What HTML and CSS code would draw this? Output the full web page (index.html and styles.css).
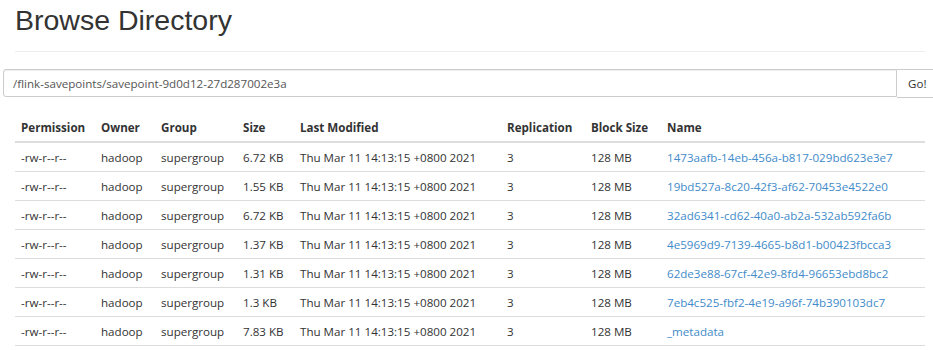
FILE: index.html
```html
<!DOCTYPE html>
<html>
<head>
<meta charset="utf-8">
<link rel="stylesheet" href="styles.css">
</head>
<body>
<div class="page">
  <h1 class="title">Browse Directory</h1>
  <hr class="rule">
  <div class="search">
    <input class="path" type="text" value="/flink-savepoints/savepoint-9d0d12-27d287002e3a">
    <button class="go">Go!</button>
  </div>
  <table class="listing">
    <thead>
      <tr>
        <th class="c-perm">Permission</th>
        <th class="c-owner">Owner</th>
        <th class="c-group">Group</th>
        <th class="c-size">Size</th>
        <th class="c-mod">Last Modified</th>
        <th class="c-rep">Replication</th>
        <th class="c-block">Block Size</th>
        <th class="c-name">Name</th>
      </tr>
    </thead>
    <tbody>
      <tr><td>-rw-r--r--</td><td>hadoop</td><td>supergroup</td><td>6.72 KB</td><td>Thu Mar 11 14:13:15 +0800 2021</td><td>3</td><td>128 MB</td><td><a href="#">1473aafb-14eb-456a-b817-029bd623e3e7</a></td></tr>
      <tr><td>-rw-r--r--</td><td>hadoop</td><td>supergroup</td><td>1.55 KB</td><td>Thu Mar 11 14:13:15 +0800 2021</td><td>3</td><td>128 MB</td><td><a href="#">19bd527a-8c20-42f3-af62-70453e4522e0</a></td></tr>
      <tr><td>-rw-r--r--</td><td>hadoop</td><td>supergroup</td><td>6.72 KB</td><td>Thu Mar 11 14:13:15 +0800 2021</td><td>3</td><td>128 MB</td><td><a href="#">32ad6341-cd62-40a0-ab2a-532ab592fa6b</a></td></tr>
      <tr><td>-rw-r--r--</td><td>hadoop</td><td>supergroup</td><td>1.37 KB</td><td>Thu Mar 11 14:13:15 +0800 2021</td><td>3</td><td>128 MB</td><td><a href="#">4e5969d9-7139-4665-b8d1-b00423fbcca3</a></td></tr>
      <tr><td>-rw-r--r--</td><td>hadoop</td><td>supergroup</td><td>1.31 KB</td><td>Thu Mar 11 14:13:15 +0800 2021</td><td>3</td><td>128 MB</td><td><a href="#">62de3e88-67cf-42e9-8fd4-96653ebd8bc2</a></td></tr>
      <tr><td>-rw-r--r--</td><td>hadoop</td><td>supergroup</td><td>1.3 KB</td><td>Thu Mar 11 14:13:15 +0800 2021</td><td>3</td><td>128 MB</td><td><a href="#">7eb4c525-fbf2-4e19-a96f-74b390103dc7</a></td></tr>
      <tr><td>-rw-r--r--</td><td>hadoop</td><td>supergroup</td><td>7.83 KB</td><td>Thu Mar 11 14:13:15 +0800 2021</td><td>3</td><td>128 MB</td><td><a href="#">_metadata</a></td></tr>
    </tbody>
  </table>
</div>
</body>
</html>
```
FILE: styles.css
```css
html, body {
  margin: 0;
  padding: 0;
  background: #fff;
  overflow: hidden;
}
body {
  font-family: "Open Sans", "Noto Sans", sans-serif;
  font-size: 11.6px;
  color: #333;
}
.page {
  padding: 0 8px 0 15px;
}
.title {
  font-family: "Liberation Sans", Arial, sans-serif;
  font-weight: 400;
  font-size: 28.5px;
  line-height: 31px;
  margin: 5px 0 0 0;
  color: #333;
}
.rule {
  border: 0;
  border-top: 1px solid #eee;
  margin: 15px 0 17px 0;
}
.search {
  display: flex;
  margin-left: -12px;
  margin-right: -20px;
  height: 28px;
}
.path {
  flex: 1;
  box-sizing: border-box;
  height: 28px;
  border: 1px solid #ccc;
  border-radius: 3px 0 0 3px;
  padding: 0 9px;
  font-family: inherit;
  font-size: 11.6px;
  color: #555;
  box-shadow: inset 0 1px 1px rgba(0,0,0,0.075);
  outline: none;
}
.go {
  box-sizing: border-box;
  width: 48px;
  height: 29px;
  border: 1px solid #ccc;
  border-left: 0;
  background: #fff;
  font-family: inherit;
  font-size: 11.6px;
  color: #333;
  padding: 0 0 0 11px;
  text-align: left;
}
.listing {
  width: 910px;
  border-collapse: collapse;
  margin-top: 17px;
}
.listing th,
.listing td {
  text-align: left;
  padding: 0 6px;
  white-space: nowrap;
}
.listing th {
  font-weight: 700;
  height: 27px;
  border-bottom: 2px solid #ddd;
  vertical-align: middle;
}
.listing td {
  height: 28px;
  border-bottom: 1px solid #ddd;
}
.c-perm { width: 68px; }
.c-owner { width: 48px; }
.c-group { width: 70px; }
.c-size { width: 45px; }
.c-mod { width: 195px; }
.c-rep { width: 72px; }
.c-block { width: 64px; }
.listing a {
  color: #428bca;
  text-decoration: none;
}
```
